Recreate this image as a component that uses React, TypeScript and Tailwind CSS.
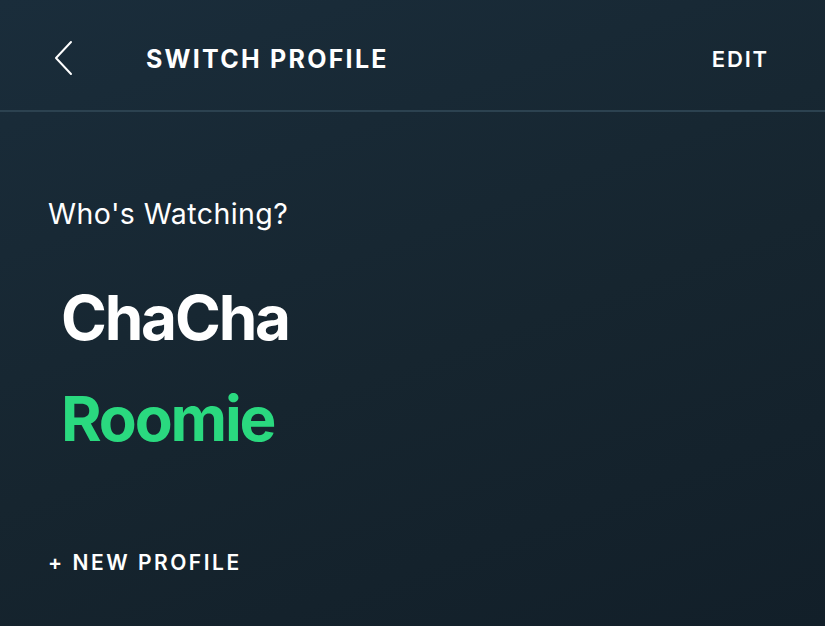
const font = { fontFamily: 'Inter, "Liberation Sans", sans-serif' }

export default function App() {
  return (
    <div
      className="w-[825px] h-[626px] flex flex-col text-white bg-[linear-gradient(160deg,#1a2d3b_0%,#16252f_55%,#121f29_100%)]"
      style={font}
    >
      {/* Header */}
      <div className="h-[112px] pt-[8px] flex items-center pl-[53px] pr-[50px] border-b-2 border-[#2c4250]">
        <svg className="w-[22px] h-[36px] mr-[71px] -mt-[3px]" viewBox="0 0 22 36" fill="none" stroke="currentColor">
          <path d="M18 2 L3 18 L18 34" strokeWidth={2} strokeLinecap="round" strokeLinejoin="round" />
        </svg>
        <h1 className="text-[25px] font-bold tracking-[0.09em] leading-none">SWITCH PROFILE</h1>
        <button className="ml-auto mr-[6px] text-[22px] font-semibold tracking-[0.085em] leading-none">EDIT</button>
      </div>

      {/* Body */}
      <div className="flex-1 flex flex-col px-[48px]">
        <p className="mt-[88px] text-[28.5px] leading-none tracking-[0.015em]">Who's Watching?</p>
        <div className="mt-[58px] flex flex-col gap-[39px] pl-[13px]">
          <span className="text-[62px] font-bold leading-none tracking-[-0.035em]">ChaCha</span>
          <span className="text-[62px] font-bold leading-none tracking-[-0.035em] text-[#2ad97f]">Roomie</span>
        </div>
        <button className="mt-[102px] self-start text-[21px] font-semibold tracking-[0.12em] leading-none">
          + NEW PROFILE
        </button>
      </div>
    </div>
  )
}
